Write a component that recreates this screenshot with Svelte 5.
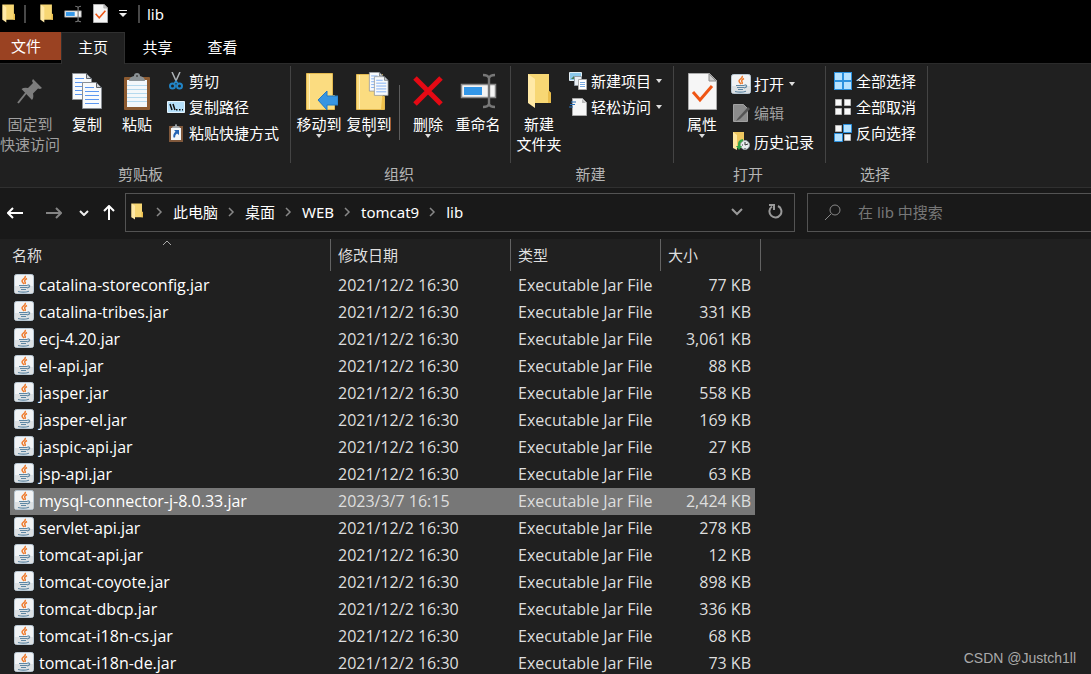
<script>
	const tabs = ['主页', '共享', '查看'];
	const path = ['此电脑', '桌面', 'WEB', 'tomcat9', 'lib'];
	const files = [
		{ name: 'catalina-storeconfig.jar', date: '2021/12/2 16:30', size: '77 KB' },
		{ name: 'catalina-tribes.jar', date: '2021/12/2 16:30', size: '331 KB' },
		{ name: 'ecj-4.20.jar', date: '2021/12/2 16:30', size: '3,061 KB' },
		{ name: 'el-api.jar', date: '2021/12/2 16:30', size: '88 KB' },
		{ name: 'jasper.jar', date: '2021/12/2 16:30', size: '558 KB' },
		{ name: 'jasper-el.jar', date: '2021/12/2 16:30', size: '169 KB' },
		{ name: 'jaspic-api.jar', date: '2021/12/2 16:30', size: '27 KB' },
		{ name: 'jsp-api.jar', date: '2021/12/2 16:30', size: '63 KB' },
		{ name: 'mysql-connector-j-8.0.33.jar', date: '2023/3/7 16:15', size: '2,424 KB' },
		{ name: 'servlet-api.jar', date: '2021/12/2 16:30', size: '278 KB' },
		{ name: 'tomcat-api.jar', date: '2021/12/2 16:30', size: '12 KB' },
		{ name: 'tomcat-coyote.jar', date: '2021/12/2 16:30', size: '898 KB' },
		{ name: 'tomcat-dbcp.jar', date: '2021/12/2 16:30', size: '336 KB' },
		{ name: 'tomcat-i18n-cs.jar', date: '2021/12/2 16:30', size: '68 KB' },
		{ name: 'tomcat-i18n-de.jar', date: '2021/12/2 16:30', size: '73 KB' }
	];

	let activeTab = '主页';
	let selected = 'mysql-connector-j-8.0.33.jar';
	let query = '';
</script>

<svelte:head>
	<title>lib</title>
</svelte:head>

{#snippet folder(w, h)}
	<svg width={w} height={h} viewBox="0 0 24 36" preserveAspectRatio="none">
		<path d="M1 1h21v17l2 2v10H1z" fill="#f7d774" />
		<path d="M22 18l2 2v10h-3V19z" fill="#e9bd4c" />
		<path d="M1 1l7 5v29l-7-5z" fill="#ffe9a6" />
	</svg>
{/snippet}

{#snippet rename(w, h)}
	<svg width={w} height={h} viewBox="0 0 37 36">
		<path d="M1.5 11.5h34v13h-34z" fill="#f4f4f4" stroke="#8a8a8a" stroke-width="1.5" />
		<path d="M4 14h18v8H4z" fill="#3397e8" />
		<path d="M23 2q5 0 6 3q1-3 6-3M29 5v27M23 34q5 0 6-3q1 3 6 3" fill="none" stroke="#777" stroke-width="2.4" />
	</svg>
{/snippet}

{#snippet properties(w, h)}
	<svg width={w} height={h} viewBox="0 0 29 37">
		<path d="M.5.5h21l7 7v29H.5z" fill="#f6f6f6" stroke="#aaa" />
		<path d="M21 1v7h7z" fill="#ccc" stroke="#8c8c8c" />
		<path d="M5 19l7 8L24 13" fill="none" stroke="#ef5514" stroke-width="3" />
	</svg>
{/snippet}

{#snippet java()}
	<svg class="java" width="20" height="20" viewBox="0 0 20 20">
		<rect x=".5" y=".5" width="19" height="19" rx="2" fill="#f1f3f5" stroke="#b9c8d4" />
		<path d="M1 12h18v7H1z" fill="#dde1e4" />
		<path d="M11 2c1.500 2-3 3-3 5 0 1 1 2 2 3M13 4.500c-2 1-3 2-2 3.500.500.500.500 1 0 2" fill="none" stroke="#ee7a2c" stroke-width="1.500" />
		<path d="M5 11.500h8.500M6 13.500h7M7 15.500h5M13.500 11c3-.500 3 2.500-.500 3M4 17.500c3 .8 8 .8 11-.2" fill="none" stroke="#5f87a3" stroke-width="1.200" />
	</svg>
{/snippet}

{#snippet sheet(x, y)}
	<g transform="translate({x} {y})">
		<path d="M.5.5h14l5 5v21H.5z" fill="#f8fafc" stroke="#8b8f94" />
		<path d="M14.500.5v5h5z" fill="#cfd3d8" stroke="#5f646a" />
		<path d="M3 5.500h9M3 9.500h14M3 13.500h14M3 17.500h14M3 21.500h14" stroke="#5b97f0" />
	</g>
{/snippet}

{#snippet chevron()}
	<svg class="chevron" width="7" height="10" viewBox="0 0 7 10">
		<path d="M1 1l4 4-4 4" fill="none" stroke="#888" stroke-width="1.500" />
	</svg>
{/snippet}

<div class="explorer">
	<header class="titlebar">
		{@render folder(13, 19)}
		<span class="divider"></span>
		<button class="quick" aria-label="新建文件夹">{@render folder(13, 19)}</button>
		<button class="quick" aria-label="重命名">{@render rename(18, 18)}</button>
		<button class="quick" aria-label="属性">{@render properties(15, 19)}</button>
		<button class="quick" aria-label="自定义快速访问工具栏">
			<svg width="8" height="7" viewBox="0 0 8 7"><path d="M0 0h8v1H0zM0 3h8L4 7z" fill="#eee" /></svg>
		</button>
		<span class="divider"></span>
		<span class="title">lib</span>
	</header>

	<nav class="tabs">
		<button class="tab tab_file">文件</button>
		{#each tabs as tab}
			<button class="tab" class:tab_active={activeTab === tab} on:click={() => (activeTab = tab)}>{tab}</button>
		{/each}
	</nav>

	<div class="ribbon">
		<section class="group group_clipboard">
			<div class="tools">
				<button class="big big_wide" disabled>
					<span class="picture">
						<svg width="26" height="26" viewBox="0 0 26 26">
							<path d="M16 1l9 9-2 1-2-.500-5 5q1 4-1 6.500L4.500 11Q7 9 11 10l5-5-1-2z" fill="#7d7d7d" />
							<path d="M9 15L1 25" stroke="#7d7d7d" stroke-width="2" />
						</svg>
					</span>
					固定到<br />快速访问
				</button>
				<button class="big">
					<span class="picture">
						<svg width="30" height="37" viewBox="0 0 30 37">
							{@render sheet(0, 0)}
							{@render sheet(10, 9)}
						</svg>
					</span>
					复制
				</button>
				<button class="big">
					<span class="picture">
						<svg width="26" height="37" viewBox="0 0 26 37">
							<rect y="4" width="26" height="33" rx="1" fill="#8c5a30" />
							<path d="M3 7h20v27H3z" fill="#f3f7fa" />
							<path d="M3 12.500h20M3 16.500h20M3 20.500h20M3 24.500h20M3 28.500h20" stroke="#b5d9ee" />
							<path d="M5 8q0-4 5-5 0-3 3-3t3 3q5 1 5 5z" fill="#8b9296" />
							<circle cx="13" cy="3" r="1" fill="#444" />
						</svg>
					</span>
					粘贴
				</button>
				<div class="smalls">
					<button class="small">
						<span class="glyph">
							<svg width="14" height="18" viewBox="0 0 14 18">
								<path d="M3 0l5 11M11 0L6 11" stroke="#aeb4b8" stroke-width="1.500" />
								<circle cx="3.500" cy="14" r="2.500" fill="none" stroke="#2185c8" stroke-width="2" />
								<circle cx="10.500" cy="14" r="2.500" fill="none" stroke="#2185c8" stroke-width="2" />
								<path d="M5 12l2-3 2 3" fill="none" stroke="#2185c8" stroke-width="1.500" />
							</svg>
						</span>
						剪切
					</button>
					<button class="small">
						<span class="glyph">
							<svg width="18" height="12" viewBox="0 0 18 12">
								<path d="M.5.5h17v11H.5z" fill="#b5e0fb" stroke="#e4f3fc" />
								<path d="M3 3l2 6M6 3l2 6" stroke="#111" stroke-width="1.500" />
								<path d="M9 8h1.500v1.500H9zM12 8h1.500v1.500H12zM15 8h1v1.500h-1z" fill="#111" />
							</svg>
						</span>
						复制路径
					</button>
					<button class="small">
						<span class="glyph">
							<svg width="14" height="18" viewBox="0 0 14 18">
								<path d="M0 2h14v16H0z" fill="#80583b" />
								<path d="M2 4h10v12H2z" fill="#f3f6f8" />
								<path d="M3 4q0-2 3-2 0-2 1-2t1 2q3 0 3 2z" fill="#a2a8ac" />
								<path d="M5 6h5v5L8 9.500q-2 1-2 4H4.500q-1-3 2-6z" fill="#2464b4" />
							</svg>
						</span>
						粘贴快捷方式
					</button>
				</div>
			</div>
			<h2>剪贴板</h2>
		</section>

		<section class="group group_organize">
			<div class="tools">
				<button class="big">
					<span class="picture picture_folder">
						<svg width="32" height="37" viewBox="0 0 32 37">
							<path d="M.5.5h26v22h2v14H.5z" fill="#fbdc80" stroke="#e3b94f" />
							<path d="M3.500 1v35" stroke="#fff0b8" />
							<path d="M12 27l9-9v5h11v9H21v5z" fill="#3795e2" stroke="#247ac2" />
						</svg>
					</span>
					移动到
					<span class="caret"></span>
				</button>
				<button class="big">
					<span class="picture picture_folder">
						<svg width="33" height="38" viewBox="0 0 33 38">
							<path d="M.5 2.500h26v22h2v13H.5z" fill="#fbdc80" stroke="#e3b94f" />
							<path d="M3.500 3v34" stroke="#fff0b8" />
							<path d="M26 27q0-3 2-3v13h-3z" fill="#efc04b" />
							<g transform="translate(13 0) scale(.72)">{@render sheet(0, 0)}{@render sheet(7, 6)}</g>
						</svg>
					</span>
					复制到
					<span class="caret"></span>
				</button>
				<span class="rule"></span>
				<button class="big">
					<span class="picture">
						<svg width="30" height="30" viewBox="0 0 30 30">
							<path d="M2 2l26 26M28 2L2 28" stroke="#e50914" stroke-width="5" />
						</svg>
					</span>
					删除
					<span class="caret"></span>
				</button>
				<button class="big">
					<span class="picture">{@render rename(37, 36)}</span>
					重命名
				</button>
			</div>
			<h2>组织</h2>
		</section>

		<section class="group group_new">
			<div class="tools">
				<button class="big">
					<span class="picture">{@render folder(24, 36)}</span>
					新建<br />文件夹
				</button>
				<div class="smalls">
					<button class="small">
						<span class="glyph">
							<svg width="18" height="18" viewBox="0 0 18 18">
								<path d="M.5.5h12v8H.5z" fill="#8ac7ea" stroke="#e2edf3" />
								<path d="M2 7l3-3 3 3z" fill="#477b55" />
								<path d="M5.500 4.500h7v9h-7z" fill="#e8edf2" stroke="#939ca5" />
								<path d="M9.500 7.500h8v10h-8z" fill="#fff" stroke="#aaa" />
								<path d="M11 10.500h5M11 12.500h5M11 14.500h5" stroke="#78a9df" />
							</svg>
						</span>
						新建项目
						<span class="caret"></span>
					</button>
					<button class="small">
						<span class="glyph">
							<svg width="18" height="18" viewBox="0 0 18 18">
								<path d="M3.500.5h10l4 4v13h-14z" fill="#f7f7f7" stroke="#aaa" />
								<path d="M13 1v4h4z" fill="#bbb" />
								<path d="M2 4h5M1 6.500h5M0 9h4" stroke="#2870ba" />
							</svg>
						</span>
						轻松访问
						<span class="caret"></span>
					</button>
				</div>
			</div>
			<h2>新建</h2>
		</section>

		<section class="group group_open">
			<div class="tools">
				<button class="big">
					<span class="picture">{@render properties(29, 37)}</span>
					属性
					<span class="caret"></span>
				</button>
				<div class="smalls smalls_tall">
					<button class="small">
						<span class="glyph">{@render java()}</span>
						打开
						<span class="caret"></span>
					</button>
					<button class="small" disabled>
						<span class="glyph">
							<svg width="17" height="18" viewBox="0 0 17 18">
								<path d="M.5.5h10l4 4v13H.5z" fill="#8c8c8c" stroke="#a1a1a1" />
								<path d="M15 3L5 14l-2 3 4-2L17 5z" fill="#555" />
							</svg>
						</span>
						编辑
					</button>
					<button class="small">
						<span class="glyph">
							<svg width="17" height="19" viewBox="0 0 17 19">
								<path d="M0 0h11v16H0z" fill="#edc65f" />
								<path d="M0 0l4 3v15l-4-2z" fill="#ffe8a0" />
								<circle cx="12" cy="13" r="4.500" fill="#e9edef" stroke="#9ba5a9" />
								<path d="M12 10v3l3-1M9 13h1M12 16v1" fill="none" stroke="#333" />
								<path d="M5 14q-1-6 5-7v2q-3 1-3 5l2 0-3 4-3-4z" fill="#34a448" />
							</svg>
						</span>
						历史记录
					</button>
				</div>
			</div>
			<h2>打开</h2>
		</section>

		<section class="group group_select">
			<div class="tools">
				<div class="smalls">
					<button class="small">
						<span class="glyph">
							<svg width="18" height="18" viewBox="0 0 18 18">
								<path d="M0 0h18v18H0z" fill="#2c91de" />
								<path d="M1 1h7v7H1zM10 1h7v7h-7zM1 10h7v7H1zM10 10h7v7h-7z" fill="#b6e2ff" />
							</svg>
						</span>
						全部选择
					</button>
					<button class="small">
						<span class="glyph">
							<svg width="16" height="16" viewBox="0 0 16 16">
								<path d="M.5.5h6v6h-6zM9.500.5h6v6h-6zM.5 9.500h6v6h-6zM9.500 9.500h6v6h-6z" fill="#f8f8f8" stroke="#b6b6b6" />
							</svg>
						</span>
						全部取消
					</button>
					<button class="small">
						<span class="glyph">
							<svg width="18" height="18" viewBox="0 0 18 18">
								<path d="M1.500 1.500h6v6h-6zM10.500 10.500h6v6h-6z" fill="#f8f8f8" stroke="#b6b6b6" />
								<path d="M9.500.5h8v8h-8zM.5 9.500h8v8h-8z" fill="#b6e2ff" stroke="#2c91de" />
							</svg>
						</span>
						反向选择
					</button>
				</div>
			</div>
			<h2>选择</h2>
		</section>
	</div>

	<div class="navbar">
		<div class="history">
			<button aria-label="后退">
				<svg width="16" height="12" viewBox="0 0 16 12"><path d="M16 6H1M6 1L1 6l5 5" fill="none" stroke="#fff" stroke-width="2" /></svg>
			</button>
			<button aria-label="前进">
				<svg width="16" height="12" viewBox="0 0 16 12"><path d="M0 6h15M10 1l5 5-5 5" fill="none" stroke="#848484" stroke-width="2" /></svg>
			</button>
			<button aria-label="最近浏览的位置">
				<svg width="10" height="6" viewBox="0 0 10 6"><path d="M1 1l4 4 4-4" fill="none" stroke="#eee" stroke-width="2" /></svg>
			</button>
			<button aria-label="上移">
				<svg width="12" height="15" viewBox="0 0 12 15"><path d="M6 15V1M1 6l5-5 5 5" fill="none" stroke="#fff" stroke-width="2" /></svg>
			</button>
		</div>
		<div class="address">
			{@render folder(12, 17)}
			{#each path as part}
				{@render chevron()}
				<a href="#{part}">{part}</a>
			{/each}
			<button class="dropdown" aria-label="以前的位置">
				<svg width="12" height="8" viewBox="0 0 12 8"><path d="M1 1l5 5 5-5" fill="none" stroke="#999" stroke-width="2" /></svg>
			</button>
			<button class="refresh" aria-label="刷新">
				<svg width="15" height="15" viewBox="0 0 15 15">
					<path d="M10 2a6 6 0 1 1-6 .500" fill="none" stroke="#999" stroke-width="2" />
					<path d="M1 1h5v5" fill="none" stroke="#999" stroke-width="2" />
				</svg>
			</button>
		</div>
		<label class="search">
			<svg width="16" height="16" viewBox="0 0 16 16">
				<circle cx="10" cy="6" r="5" fill="none" stroke="#888" />
				<path d="M6 10l-6 6" stroke="#888" />
			</svg>
			<input type="text" placeholder="在 lib 中搜索" aria-label="在 lib 中搜索" bind:value={query} />
		</label>
	</div>

	<main class="files">
		<table>
			<colgroup>
				<col class="col_name" />
				<col class="col_date" />
				<col class="col_type" />
				<col class="col_size" />
				<col class="col_end" />
			</colgroup>
			<thead>
				<tr>
					<th class="name">
						名称
						<svg class="sort" width="10" height="6" viewBox="0 0 10 6"><path d="M1 5l4-4 4 4" fill="none" stroke="#aaa" /></svg>
					</th>
					<th>修改日期</th>
					<th>类型</th>
					<th colspan="2">大小</th>
				</tr>
			</thead>
			<tbody>
				{#each files as file}
					<tr class:selected={selected === file.name} on:click={() => (selected = file.name)}>
						<td class="name"><div class="file">{@render java()}{file.name}</div></td>
						<td>{file.date}</td>
						<td>Executable Jar File</td>
						<td class="size">{file.size}</td>
						<td class="end"></td>
					</tr>
				{/each}
			</tbody>
		</table>
		<span class="watermark">CSDN @Justch1ll</span>
	</main>
</div>

<style>
	:global(body) {
		background: #202020;
	}
	.explorer {
		display: flex;
		flex-direction: column;
		height: 100vh;
		overflow: hidden;
		color: #fff;
		font: 15px/20px 'Noto Sans', 'Noto Sans CJK SC', sans-serif;
		white-space: nowrap;
	}
	button {
		padding: 0;
		border: 0;
		background: none;
		color: inherit;
		font: inherit;
	}
	svg {
		display: block;
		flex: none;
	}

	.titlebar {
		display: flex;
		align-items: center;
		height: 32px;
		padding: 0 2px 5px;
		box-sizing: border-box;
		background: #000;
	}
	.divider {
		width: 2px;
		height: 18px;
		margin: 0 14px 0 9px;
		background: #484848;
	}
	.quick {
		margin-right: 11px;
	}
	.quick + .divider {
		margin: 0 7px 0 0;
	}

	.tabs {
		display: flex;
		height: 32px;
		background: #000;
		border-bottom: 1px solid #2b2b2b;
		box-sizing: border-box;
	}
	.tab {
		width: 65px;
		padding-bottom: 2px;
		border: 1px solid transparent;
		border-bottom: 0;
	}
	.tab_file {
		width: 61px;
		height: 28px;
		padding-right: 9px;
		padding-bottom: 1px;
		background: #9a4222;
	}
	.tab_active {
		width: 64px;
		margin-bottom: -1px;
		padding-bottom: 3px;
		border-color: #303030;
		background: #202020;
	}

	.ribbon {
		display: flex;
		height: 123px;
		background: #202020;
		border-bottom: 1px solid #303030;
	}
	.group {
		display: flex;
		flex-direction: column;
		box-sizing: border-box;
		padding-top: 2px;
	}
	.group_clipboard {
		width: 291px;
	}
	.group_organize {
		width: 220px;
	}
	.group_new {
		width: 163px;
	}
	.group_open {
		width: 152px;
	}
	.group_select {
		width: 102px;
	}
	.tools {
		display: flex;
		align-items: flex-start;
		height: 97px;
		padding-left: 3px;
		border-right: 1px solid #444;
	}
	.group_clipboard .tools {
		padding-left: 0;
	}
	h2 {
		margin: 0;
		padding-right: 4px;
		color: #b5b5b5;
		font-size: 15px;
		font-weight: 400;
		line-height: 22px;
		text-align: center;
	}
	.group_clipboard h2 {
		padding-right: 10px;
	}
	.big {
		display: flex;
		flex-direction: column;
		align-items: center;
		width: 50px;
		padding-top: 5px;
		text-align: center;
	}
	.big_wide {
		width: 60px;
		margin-right: 2px;
	}
	.big:disabled,
	.small:disabled {
		color: #a0a0a0;
	}
	.picture {
		display: flex;
		align-items: center;
		height: 40px;
		margin-bottom: 3px;
	}
	.picture_folder {
		padding-left: 6px;
	}
	.caret {
		border: 3px solid transparent;
		border-top: 4px solid #ddd;
		border-bottom: 0;
	}
	.rule {
		width: 1px;
		height: 55px;
		margin: 19px 3px 0 5px;
		background: #5c5c5c;
	}
	.smalls {
		display: flex;
		flex-direction: column;
		align-items: flex-start;
		padding: 2px 0 0 5px;
	}
	.small {
		display: flex;
		align-items: center;
		height: 26px;
	}
	.small .caret {
		margin-left: 5px;
	}
	.smalls_tall {
		padding-top: 3px;
		padding-left: 4px;
	}
	.smalls_tall .small {
		height: 29px;
	}
	.glyph {
		display: flex;
		justify-content: center;
		width: 18px;
		margin-right: 4px;
	}
	.smalls_tall .glyph {
		width: 20px;
		margin-right: 3px;
	}

	.navbar {
		display: flex;
		padding: 5px 0 7px;
		background: #191919;
	}
	.history {
		display: flex;
		align-items: center;
		gap: 17px;
		width: 118px;
		padding-left: 7px;
	}
	.history button:first-child {
		margin-right: 6px;
	}
	.history button:last-child {
		margin-left: -3px;
	}
	.address {
		display: flex;
		align-items: center;
		flex: 0 1 670px;
		height: 39px;
		padding-left: 5px;
		padding-bottom: 2px;
		border: 1px solid #535353;
		box-sizing: border-box;
	}
	.address > :global(.chevron) {
		margin: 0 10px;
	}
	.address > :global(.chevron:nth-child(2)) {
		margin-left: 13px;
	}
	.address a {
		color: #fff;
		text-decoration: none;
	}
	.dropdown {
		margin-left: auto;
	}
	.refresh {
		margin: 0 11px 0 25px;
	}
	.search {
		display: flex;
		align-items: center;
		flex: 1;
		gap: 17px;
		height: 39px;
		margin-left: 12px;
		padding-left: 17px;
		padding-bottom: 2px;
		border: 1px solid #535353;
		border-right: 0;
		box-sizing: border-box;
	}
	.search input {
		flex: 1;
		min-width: 0;
		padding: 0;
		border: 0;
		outline: 0;
		background: none;
		color: #fff;
		font: inherit;
	}
	.search input::placeholder {
		color: #777;
		opacity: 1;
	}

	.files {
		position: relative;
		flex: 1;
		min-height: 0;
		overflow: hidden;
		background: #202020;
	}
	table {
		width: 751px;
		margin-left: 10px;
		border-collapse: separate;
		border-spacing: 0;
		table-layout: fixed;
	}
	.col_name {
		width: 321px;
	}
	.col_date {
		width: 180px;
	}
	.col_type {
		width: 150px;
	}
	.col_size {
		width: 94px;
	}
	.col_end {
		width: 6px;
	}
	th {
		position: relative;
		height: 32px;
		padding: 0 7px;
		border-right: 1px solid #636363;
		color: #dedede;
		font-weight: 400;
		text-align: left;
	}
	th.name {
		padding-left: 2px;
	}
	.sort {
		position: absolute;
		top: 1px;
		left: 152px;
	}
	tbody {
		font: 16px/20px 'Open Sans', 'Noto Sans CJK SC', sans-serif;
	}
	tbody::before {
		content: '';
		display: block;
		height: 1px;
	}
	td {
		box-sizing: border-box;
		height: 27px;
		padding: 0 7px 2px;
		color: #dedede;
	}
	td.name {
		padding: 0 4px 2px;
		color: #fff;
	}
	td.size {
		padding: 0 4px 2px;
		text-align: right;
	}
	td.end {
		padding: 0;
	}
	.file {
		display: flex;
		gap: 5px;
	}
	.file :global(.java) {
		margin-top: -1px;
	}
	.selected td:not(.end) {
		background: #777;
	}
	.watermark {
		position: absolute;
		right: 15px;
		bottom: 6px;
		color: #aaa;
		font: 14px/20px 'Liberation Sans', sans-serif;
	}
</style>
